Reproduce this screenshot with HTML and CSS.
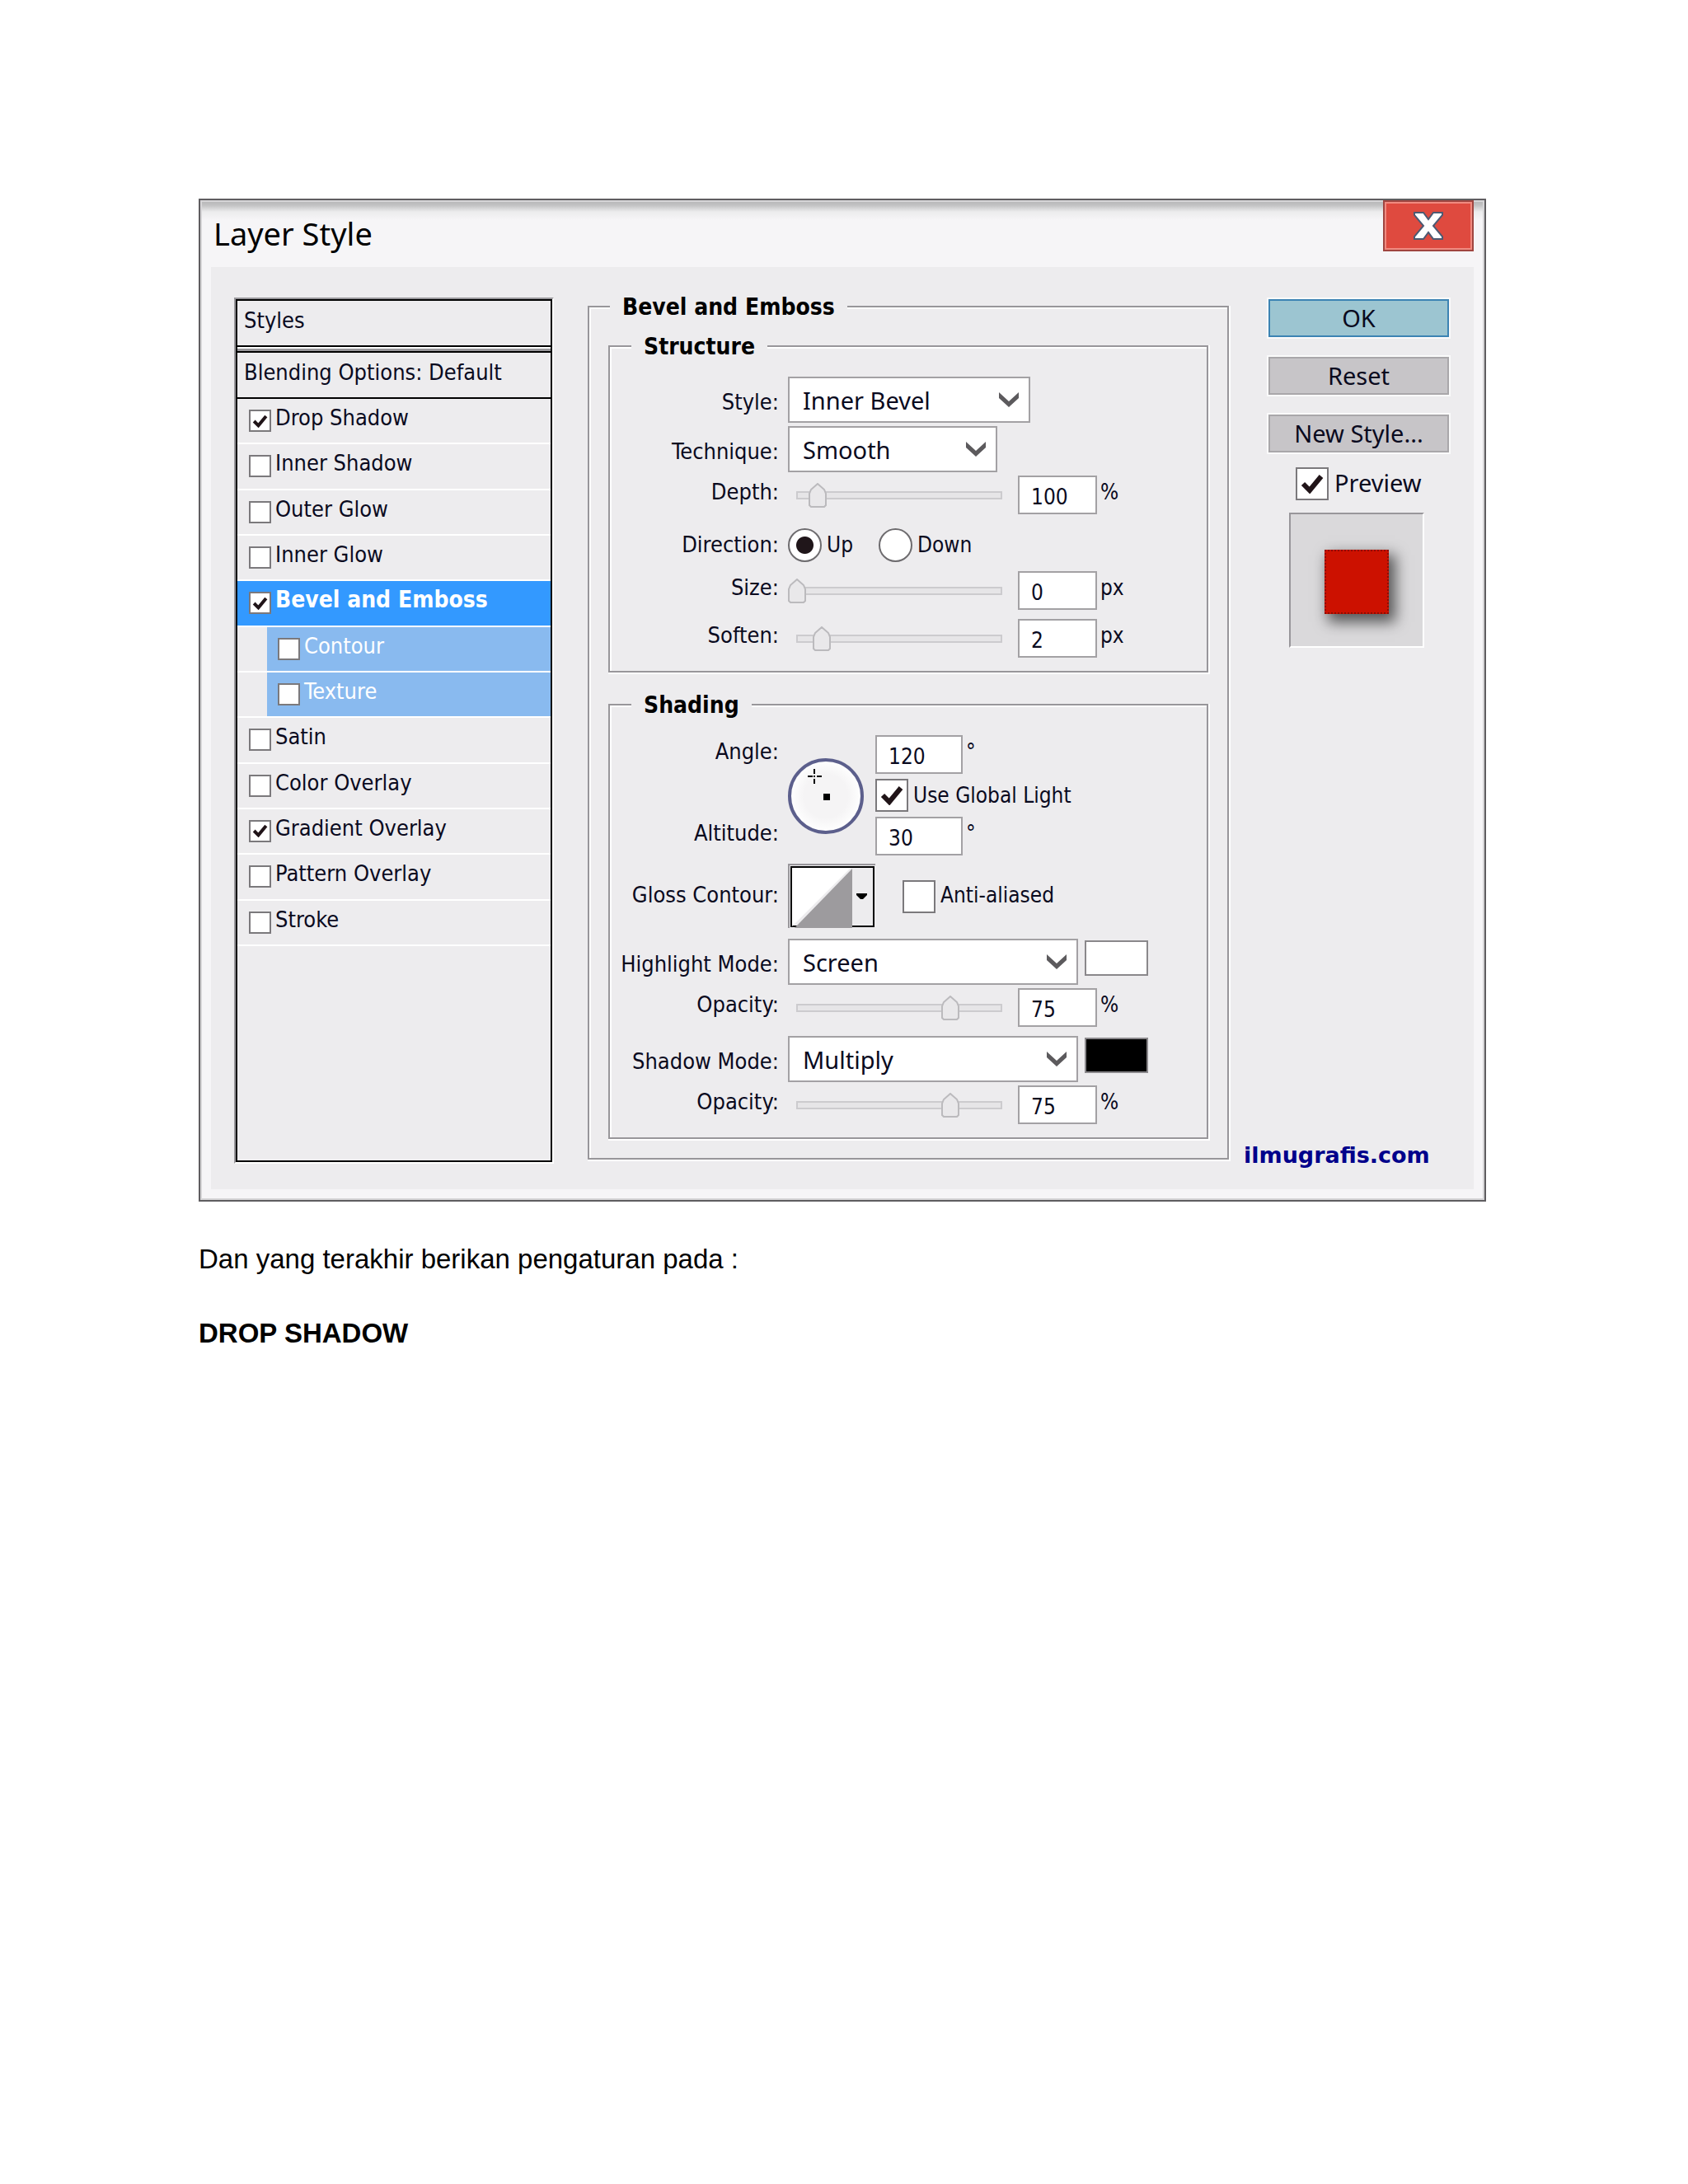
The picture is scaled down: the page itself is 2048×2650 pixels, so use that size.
FILE: index.html
```html
<!DOCTYPE html>
<html lang="id">
<head>
<meta charset="utf-8">
<title>Layer Style</title>
<link rel="stylesheet" href="styles.css">
</head>
<body>
<main class="page">
  <section class="dialog" aria-labelledby="dialog-title">
    <header class="titlebar">
      <h1 class="title" id="dialog-title">Layer Style</h1>
      <button class="close" type="button" aria-label="Close">
        <svg width="40" height="36" viewBox="0 0 40 36">
          <path d="M3 2H14L20 10L26 2H37V5L26 18L37 31V34H26L20 26L14 34H3V31L14 18L3 5Z" fill="#fff" stroke="#4d5a73" stroke-width="2"/>
        </svg>
      </button>
    </header>
    <form class="panel">
      <nav class="styles">
        <div class="styles-inner">
          <h2 class="styles-head">Styles</h2>
          <div class="styles-rule"></div>
          <p class="styles-head">Blending Options: Default</p>
          <ul class="effects">
            <li class="effect"><input class="tick small" type="checkbox" id="e1" checked><label for="e1">Drop Shadow</label></li>
            <li class="effect"><input class="tick small" type="checkbox" id="e2"><label for="e2">Inner Shadow</label></li>
            <li class="effect"><input class="tick small" type="checkbox" id="e3"><label for="e3">Outer Glow</label></li>
            <li class="effect"><input class="tick small" type="checkbox" id="e4"><label for="e4">Inner Glow</label></li>
            <li class="effect selected"><input class="tick small" type="checkbox" id="e5" checked><label for="e5">Bevel and Emboss</label></li>
            <li class="effect sub"><input class="tick small" type="checkbox" id="e6"><label for="e6">Contour</label></li>
            <li class="effect sub"><input class="tick small" type="checkbox" id="e7"><label for="e7">Texture</label></li>
            <li class="effect"><input class="tick small" type="checkbox" id="e8"><label for="e8">Satin</label></li>
            <li class="effect"><input class="tick small" type="checkbox" id="e9"><label for="e9">Color Overlay</label></li>
            <li class="effect"><input class="tick small" type="checkbox" id="e10" checked><label for="e10">Gradient Overlay</label></li>
            <li class="effect"><input class="tick small" type="checkbox" id="e11"><label for="e11">Pattern Overlay</label></li>
            <li class="effect"><input class="tick small" type="checkbox" id="e12"><label for="e12">Stroke</label></li>
          </ul>
        </div>
      </nav>

      <fieldset class="group options">
        <legend class="main-legend">Bevel and Emboss</legend>
        <fieldset class="group">
          <legend>Structure</legend>
          <div class="rows structure">
            <div class="row pick">
              <label class="name" for="style">Style:</label>
              <select class="select wide" id="style"><option>Inner Bevel</option></select>
            </div>
            <div class="row pick">
              <label class="name" for="technique">Technique:</label>
              <select class="select" id="technique"><option>Smooth</option></select>
            </div>
            <div class="row">
              <label class="name" for="depth">Depth:</label>
              <input class="slider" type="range" value="10" aria-label="Depth slider">
              <input class="field" type="text" id="depth" value="100"><span class="unit">%</span>
            </div>
            <div class="row">
              <span class="name">Direction:</span>
              <input class="radio" type="radio" name="direction" id="up" checked><label class="choice first" for="up">Up</label>
              <input class="radio" type="radio" name="direction" id="down"><label class="choice" for="down">Down</label>
            </div>
            <div class="row">
              <label class="name" for="size">Size:</label>
              <input class="slider" type="range" value="0" aria-label="Size slider">
              <input class="field" type="text" id="size" value="0"><span class="unit">px</span>
            </div>
            <div class="row">
              <label class="name" for="soften">Soften:</label>
              <input class="slider" type="range" value="12" aria-label="Soften slider">
              <input class="field" type="text" id="soften" value="2"><span class="unit">px</span>
            </div>
          </div>
        </fieldset>

        <fieldset class="group shading">
          <legend>Shading</legend>
          <div class="rows shade">
            <div class="row">
              <div class="name stack">
                <label for="angle">Angle:</label>
                <label for="altitude">Altitude:</label>
              </div>
              <svg class="dial" width="92" height="92" viewBox="0 0 92 92">
                <defs><radialGradient id="face"><stop offset="0.6" stop-color="#f5f4f5"/><stop offset="1" stop-color="#fff"/></radialGradient></defs>
                <circle cx="46" cy="46" r="44" fill="url(#face)" stroke="#5c5f8c" stroke-width="4"/>
                <path d="M24 22H30M35 22H41M32 13V19M32 25V31M31 22H33" stroke="#000" stroke-width="2"/>
                <path d="M43 43H51V51H43Z" fill="#000"/>
              </svg>
              <div class="light">
                <div class="line"><input class="field broad" type="text" id="angle" value="120"><span class="unit">°</span></div>
                <div class="line"><input class="tick" type="checkbox" id="global" checked><label class="choice" for="global">Use Global Light</label></div>
                <div class="line"><input class="field broad" type="text" id="altitude" value="30"><span class="unit">°</span></div>
              </div>
            </div>
            <div class="row gloss">
              <label class="name" for="contour">Gloss Contour:</label>
              <button class="contour" type="button" id="contour">
                <svg width="106" height="78" viewBox="0 0 106 78">
                  <path d="M0 0H106V2H2V78H0Z" fill="#98969a"/>
                  <path d="M4 4H104V76H4Z" fill="#edecee" stroke="#000" stroke-width="2"/>
                  <path d="M5 5H76L5 76Z" fill="#fff"/>
                  <path d="M78 6V78H8Z" fill="#9d9b9e"/>
                  <path d="M83 36H96V38L91 43H88L83 38Z" fill="#000"/>
                </svg>
              </button>
              <input class="tick" type="checkbox" id="aa"><label class="choice" for="aa">Anti-aliased</label>
            </div>
            <div class="row pick">
              <label class="name" for="highlight">Highlight Mode:</label>
              <select class="select mode" id="highlight"><option>Screen</option></select>
              <button class="swatch" type="button" aria-label="Highlight color"></button>
            </div>
            <div class="row">
              <label class="name" for="hop">Opacity:</label>
              <input class="slider" type="range" value="75" aria-label="Highlight opacity slider">
              <input class="field" type="text" id="hop" value="75"><span class="unit">%</span>
            </div>
            <div class="row pick">
              <label class="name" for="shadow">Shadow Mode:</label>
              <select class="select mode" id="shadow"><option>Multiply</option></select>
              <button class="swatch black" type="button" aria-label="Shadow color"></button>
            </div>
            <div class="row">
              <label class="name" for="sop">Opacity:</label>
              <input class="slider" type="range" value="75" aria-label="Shadow opacity slider">
              <input class="field" type="text" id="sop" value="75"><span class="unit">%</span>
            </div>
          </div>
        </fieldset>
      </fieldset>

      <aside class="side">
        <button class="action primary" type="button">OK</button>
        <button class="action" type="button">Reset</button>
        <button class="action" type="button">New Style...</button>
        <div class="preview-toggle"><input class="tick" type="checkbox" id="preview" checked><label for="preview">Preview</label></div>
        <div class="preview"><div class="sample"></div></div>
        <a class="credit" href="#">ilmugrafis.com</a>
      </aside>
    </form>
  </section>

  <p class="text">Dan yang terakhir berikan pengaturan pada :</p>
  <h2 class="text strong">DROP SHADOW</h2>
</main>
</body>
</html>
```

FILE: styles.css
```css
* { box-sizing: border-box; }

body {
  margin: 0;
  background: #fff;
  color: #000;
  font-family: "Liberation Sans", Arial, sans-serif;
}

h1, h2, p, ul { margin: 0; padding: 0; font-weight: normal; }
button, input, select { margin: 0; padding: 0; font: inherit; color: inherit; border-radius: 0; }
input, select { appearance: none; flex: none; }

.page { padding: 241px 245px 80px 241px; }

/* Dialog frame */
.dialog {
  border: 2px solid #5f5d60;
  background: linear-gradient(#b4b4b5, #c2c2c3 6px, #ececed 14px, #f6f5f7 24px);
  box-shadow: inset 0 0 0 2px #d6d5d7;
  font-family: "DejaVu Sans Condensed", "Noto Sans", sans-serif;
  font-size: 26px;
  line-height: 40px;
  color: #0a0a1e;
  padding: 0 13px 13px;
}
.titlebar { display: flex; justify-content: space-between; align-items: flex-start; height: 81px; }
.title { font: 38px/80px "Noto Sans", sans-serif; padding-left: 3px; color: #000; }
.close {
  display: flex;
  align-items: center;
  justify-content: center;
  width: 110px;
  height: 62px;
  border: 2px solid #a04540;
  background: #df4a3f;
  box-shadow: inset 0 0 0 2px #f08a80;
}

.panel { display: flex; background: #edecee; padding: 33px 30px 31px 28px; }

/* Effects list */
.styles {
  flex: none;
  width: 388px;
  margin: 4px 41px 0 0;
  border: 2px solid;
  border-color: #98969a #fff #fff #98969a;
  font-size: 27px;
}
.styles-inner { height: 100%; border: 2px solid #000; }
.styles-head { height: 56px; padding-left: 8px; font-size: 27px; line-height: 48px; border-bottom: 2px solid #000; }
.styles-rule { height: 7px; background: #98969a; border-top: 2px solid #fff; border-bottom: 2px solid #000; }
.effects { list-style: none; display: grid; grid-auto-rows: 1fr; height: 664px; }
.effect {
  display: flex;
  align-items: flex-start;
  gap: 5px;
  padding-left: 14px;
  line-height: 46px;
  border-bottom: 2px solid #fff;
}
.effect .tick { margin-top: 13px; }
.selected { background: #3399ff; color: #fff; font-weight: bold; font-size: 28px; }
.sub { background: linear-gradient(#89baef, #89baef) 36px 0 no-repeat; padding-left: 49px; color: #fff; }

/* Tick boxes and radios */
.tick {
  width: 40px;
  height: 40px;
  border: 2px solid #7b797c;
  background: #fff center / 28px 24px no-repeat;
}
.tick.small { width: 27px; height: 27px; background-size: 19px 16px; }
.tick:checked {
  background-image: url("data:image/svg+xml,%3Csvg xmlns='http://www.w3.org/2000/svg' viewBox='0 0 28 24'%3E%3Cpath d='M3 12L11 20L25 3' fill='none' stroke='%23201418' stroke-width='6'/%3E%3C/svg%3E");
}
.radio {
  width: 41px;
  height: 41px;
  border: 2px solid #6d6b6e;
  border-radius: 50%;
  background: #fff;
}
.radio:checked { background: radial-gradient(circle, #20161a 10px, #fff 11px); }

/* Option groups with an etched double line */
.group {
  margin: 0;
  padding: 0;
  border: 4px solid #98969a;
  border-image: url("data:image/svg+xml,%3Csvg xmlns='http://www.w3.org/2000/svg' width='12' height='12'%3E%3Cpath d='M2 2H12V12H2Z' fill='none' stroke='%23fff' stroke-width='4'/%3E%3Cpath d='M1 1H9V9H1Z' fill='none' stroke='%2398969a' stroke-width='2'/%3E%3Cpath d='M2 3H8M3 2V8' stroke='%23fff' stroke-width='2'/%3E%3C/svg%3E") 4 stretch;
  min-width: 0;
}
.group legend { margin-left: 24px; padding: 0 15px; font-weight: bold; line-height: 32px; font-size: 28px; color: #000; }
.group .main-legend { margin-left: 23px; }
.options { flex: 1; padding: 16px 21px 21px; margin-bottom: 3px; }
.options > .main-legend { margin-left: 2px; }
.shading { margin-top: 22px; }
.rows { display: grid; padding: 20px 0 16px; }
.structure { grid-template-rows: 60px 60px 64px 52px 58px 47px; }
.shade { grid-template-rows: 156px 91px 60px 58px 60px 47px; }
.row, .line { display: flex; align-items: flex-start; }
.row.pick { align-items: baseline; }
.name { flex: none; width: 203px; margin-right: 11px; text-align: right; white-space: nowrap; font-size: 27px; }
.stack { display: flex; flex-direction: column; gap: 59px; }

.select {
  width: 254px;
  height: 56px;
  padding: 0 46px 0 16px;
  border: 2px solid #a3a1a4;
  background: #fff url("data:image/svg+xml,%3Csvg xmlns='http://www.w3.org/2000/svg' width='24' height='18'%3E%3Cpath d='M0 0L12 11L24 0V7L12 18L0 7Z' fill='%235c5a5d'/%3E%3C/svg%3E") right 12px center no-repeat;
  font: 29px "Noto Sans", sans-serif;
}
.select.wide { width: 294px; }
.select.mode { width: 352px; }

.field {
  width: 96px;
  height: 47px;
  padding: 4px 0 0 14px;
  border: 2px solid #a3a1a4;
  background: #fff;
}
.field.broad { width: 106px; }
.unit { margin-left: 4px; }

.slider {
  width: 270px;
  height: 47px;
  margin-right: 9px;
  background:
    linear-gradient(#e6e5e7, #e6e5e7) center / calc(100% - 24px) 6px no-repeat,
    linear-gradient(#cccbce, #cccbce) center / calc(100% - 20px) 10px no-repeat;
}
.slider::-webkit-slider-thumb {
  appearance: none;
  width: 22px;
  height: 30px;
  background: url("data:image/svg+xml,%3Csvg xmlns='http://www.w3.org/2000/svg' width='22' height='30'%3E%3Cpath d='M11 1L19 8L21 13V27L19 29H3L1 27V13L3 8Z' fill='%23e9e8ea' stroke='%23bbbabd' stroke-width='2'/%3E%3C/svg%3E");
}

.choice { margin-left: 6px; }
.choice.first { margin-right: 31px; }

.dial { flex: none; margin-top: 28px; }
.light { display: grid; gap: 6px; margin-left: 14px; }

.gloss .name, .gloss .choice { padding-top: 18px; }
.contour { display: flex; border: 0; background: none; margin-right: 33px; }
.gloss .tick { margin-top: 20px; }

.swatch { align-self: flex-start; width: 77px; height: 43px; margin: 2px 0 0 8px; border: 2px solid #8a888b; background: #fff; }
.swatch.black { background: #000; }

/* Buttons and preview */
.side { flex: none; display: flex; flex-direction: column; width: 249px; margin: 6px 0 0 16px; font: 29px/40px "Noto Sans", sans-serif; }
.action {
  align-self: flex-end;
  width: 219px;
  height: 46px;
  margin-bottom: 24px;
  border: 2px solid #a9a7aa;
  background: #c7c5c8;
  box-shadow: 0 0 0 2px #fafafa;
  line-height: 42px;
}
.primary { border-color: #3c83b3; background: #9cc5d1; }
.preview-toggle { display: flex; gap: 7px; margin: -6px 0 15px 63px; line-height: 38px; }
.preview {
  display: grid;
  place-items: center;
  width: 164px;
  height: 164px;
  padding-top: 4px;
  margin-left: 55px;
  border: 2px solid;
  border-color: #98969a #fff #fff #98969a;
  background: #dad9db;
}
.sample {
  width: 78px;
  height: 78px;
  background: #cc1100;
  border: 2px dotted #8e0d02;
  box-shadow: 6px 8px 16px 2px rgba(0, 0, 0, 0.6);
}
.credit {
  margin-top: auto;
  font: bold 27px/20px "DejaVu Sans", sans-serif;
  color: #00008b;
  text-decoration: none;
}

/* Document text */
.text { margin-top: 50px; font-size: 33px; line-height: 40px; }
.text.strong { font-weight: bold; }
```
